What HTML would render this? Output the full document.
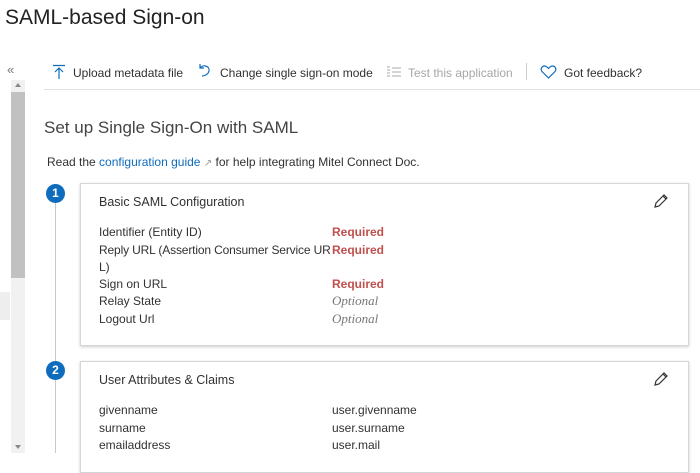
<!DOCTYPE html><html><head><style>
body{margin:0;width:700px;height:453px;overflow:hidden;background:#fff;font-family:"Liberation Sans",sans-serif;color:#333;position:relative}
.a{position:absolute;white-space:nowrap}
.t{font-size:12px;color:#323130}
.card{position:absolute;left:80px;width:607px;background:#fff;border:1px solid #d6d6d6;box-shadow:0 1px 3px rgba(0,0,0,.2)}
.req{position:absolute;left:251px;color:#c0504d;font-weight:bold;font-size:12px;line-height:16px}
.opt{position:absolute;left:251px;color:#777;font-style:italic;font-family:"Liberation Serif",serif;font-size:13px;line-height:16px}
.r{position:absolute;left:18px;font-size:12px;color:#323130;line-height:16px;white-space:nowrap}
.num{position:absolute;left:46px;width:19px;height:19px;border-radius:50%;background:#0f6cbd;color:#fff;font-size:12px;font-weight:bold;text-align:center;line-height:19px}
</style></head><body>
<div class="a" style="left:5px;top:6px;font-size:21px;color:#222">SAML-based Sign-on</div>
<div class="a" style="left:7px;top:62px;font-size:13px;color:#777">«</div>
<div class="a" style="left:11px;top:80px;width:14px;height:373px;background:#f1f1f1"></div>
<div class="a" style="left:11px;top:92px;width:14px;height:186px;background:#c1c1c1"></div>
<div class="a" style="left:15px;top:83px;width:0;height:0;border-left:3px solid transparent;border-right:3px solid transparent;border-bottom:4px solid #888"></div>
<div class="a" style="left:15px;top:445px;width:0;height:0;border-left:3px solid transparent;border-right:3px solid transparent;border-top:4px solid #888"></div>
<div class="a" style="left:0;top:292px;width:10px;height:28px;background:#eee"></div>
<svg class="a" style="left:52px;top:64px" width="14" height="16"><path d="M1 1.5H13M7 4V15M3 8L7 4L11 8" stroke="#0f6cbd" fill="none" stroke-width="1.2"/></svg>
<div class="a t" style="left:73px;top:66px">Upload metadata file</div>
<svg class="a" style="left:197px;top:63px" width="14" height="16"><path d="M3 5C6 1 13 3 12 8C11 12 7 13 5 13M3 1V5H7" stroke="#0f6cbd" fill="none" stroke-width="1.2"/></svg>
<div class="a t" style="left:220px;top:66px">Change single sign-on mode</div>
<svg class="a" style="left:386px;top:66px" width="16" height="12"><path d="M1 1H4M1 4H4M1 7H4M1 10H4M6 2H15M6 6H15M6 10H15" stroke="#aaa" fill="none"/></svg>
<div class="a t" style="left:408px;top:66px;color:#a6a6a6">Test this application</div>
<div class="a" style="left:526px;top:63px;width:1px;height:17px;background:#ccc"></div>
<svg class="a" style="left:540px;top:65px" width="17" height="14"><path d="M8.5 13L2 6.5C0 4 2 1 4.5 1C6.5 1 8 3 8.5 3.5C9 3 10.5 1 12.5 1C15 1 17 4 15 6.5Z" stroke="#0f6cbd" fill="none" stroke-width="1.2"/></svg>
<div class="a t" style="left:564px;top:66px">Got feedback?</div>
<div class="a" style="left:44px;top:89px;width:656px;height:1px;background:#e1e1e1"></div>
<div class="a" style="left:44px;top:118px;font-size:17px;color:#444">Set up Single Sign-On with SAML</div>
<div class="a t" style="left:47px;top:155px">Read the <span style="color:#0f6cbd">configuration guide</span> <span style="color:#999;font-size:10px">↗</span> for help integrating Mitel Connect Doc.</div>
<div class="a" style="left:55px;top:193px;width:1px;height:260px;background:#c8c8c8"></div>
<div class="num" style="top:184px">1</div>
<div class="num" style="top:361px">2</div>
<div class="card" style="top:183px;height:161px">
<div class="a" style="left:18px;top:11px;font-size:12.5px;color:#323130">Basic SAML Configuration</div>
<svg class="a" style="left:572px;top:9px" width="16" height="16"><path d="M2 14L3 10L11 2L14 5L6 13Z M10 3L13 6" stroke="#333" fill="none" stroke-width="1.2"/></svg>
<div class="r" style="top:40px">Identifier (Entity ID)</div>
<div class="r" style="top:58px;letter-spacing:-0.15px">Reply URL (Assertion Consumer Service UR</div>
<div class="r" style="top:75px">L)</div>
<div class="r" style="top:92px">Sign on URL</div>
<div class="r" style="top:109px">Relay State</div>
<div class="r" style="top:127px">Logout Url</div>
<div class="req" style="top:40px">Required</div>
<div class="req" style="top:58px">Required</div>
<div class="req" style="top:92px">Required</div>
<div class="opt" style="top:109px">Optional</div>
<div class="opt" style="top:127px">Optional</div>
</div>
<div class="card" style="top:361px;height:110px">
<div class="a" style="left:18px;top:11px;font-size:12.5px;color:#323130">User Attributes &amp; Claims</div>
<svg class="a" style="left:572px;top:9px" width="16" height="16"><path d="M2 14L3 10L11 2L14 5L6 13Z M10 3L13 6" stroke="#333" fill="none" stroke-width="1.2"/></svg>
<div class="r" style="top:40px">givenname</div>
<div class="r" style="top:58px">surname</div>
<div class="r" style="top:75px">emailaddress</div>
<div class="r" style="top:40px;left:251px">user.givenname</div>
<div class="r" style="top:58px;left:251px">user.surname</div>
<div class="r" style="top:75px;left:251px">user.mail</div>
</div>
</body></html>
